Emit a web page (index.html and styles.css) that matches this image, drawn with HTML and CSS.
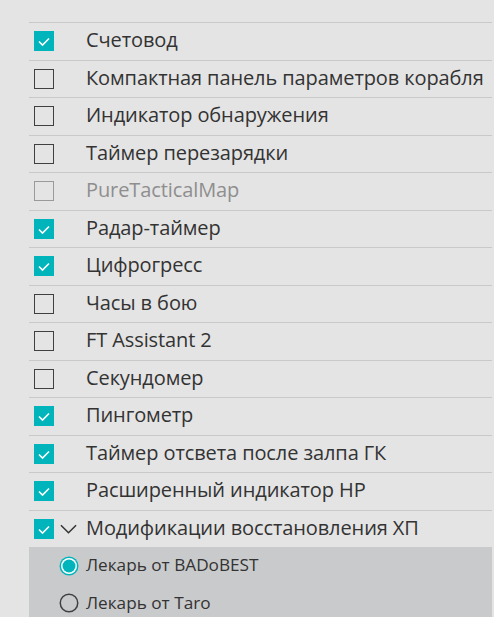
FILE: index.html
```html
<!DOCTYPE html>
<html lang="ru">
<head>
<meta charset="utf-8">
<link rel="stylesheet" href="styles.css">
</head>
<body>
<div class="list">
  <div class="row"><span class="cb on"><svg viewBox="0 0 20 20"><polyline points="5,10.5 8.5,14 15,7.5"/></svg></span><span class="label">Счетовод</span></div>
  <div class="row"><span class="cb"></span><span class="label">Компактная панель параметров корабля</span></div>
  <div class="row"><span class="cb"></span><span class="label">Индикатор обнаружения</span></div>
  <div class="row"><span class="cb"></span><span class="label">Таймер перезарядки</span></div>
  <div class="row disabled"><span class="cb"></span><span class="label">PureTacticalMap</span></div>
  <div class="row"><span class="cb on"><svg viewBox="0 0 20 20"><polyline points="5,10.5 8.5,14 15,7.5"/></svg></span><span class="label">Радар-таймер</span></div>
  <div class="row"><span class="cb on"><svg viewBox="0 0 20 20"><polyline points="5,10.5 8.5,14 15,7.5"/></svg></span><span class="label">Цифрогресс</span></div>
  <div class="row"><span class="cb"></span><span class="label">Часы в бою</span></div>
  <div class="row"><span class="cb"></span><span class="label">FT Assistant 2</span></div>
  <div class="row"><span class="cb"></span><span class="label">Секундомер</span></div>
  <div class="row"><span class="cb on"><svg viewBox="0 0 20 20"><polyline points="5,10.5 8.5,14 15,7.5"/></svg></span><span class="label">Пингометр</span></div>
  <div class="row"><span class="cb on"><svg viewBox="0 0 20 20"><polyline points="5,10.5 8.5,14 15,7.5"/></svg></span><span class="label">Таймер отсвета после залпа ГК</span></div>
  <div class="row"><span class="cb on"><svg viewBox="0 0 20 20"><polyline points="5,10.5 8.5,14 15,7.5"/></svg></span><span class="label">Расширенный индикатор HP</span></div>
  <div class="row parent"><span class="cb on"><svg viewBox="0 0 20 20"><polyline points="5,10.5 8.5,14 15,7.5"/></svg></span><svg class="chev" viewBox="0 0 18 10"><polyline points="1,1 9,9 17,1"/></svg><span class="label">Модификации восстановления ХП</span></div>
  <div class="sub">
    <div class="subrow"><svg class="radio" viewBox="0 0 20 20"><circle cx="10" cy="10" r="9.5" class="r-outer"/><circle cx="10" cy="10" r="8" class="r-gap"/><circle cx="10" cy="10" r="6.5" class="r-dot"/></svg><span class="sublabel">Лекарь от BADoBEST</span></div>
    <div class="subrow"><svg class="radio" viewBox="0 0 20 20"><circle cx="10" cy="10" r="8.75" class="r-off"/></svg><span class="sublabel">Лекарь от Taro</span></div>
  </div>
</div>
</body>
</html>
```
FILE: styles.css
```css
html, body {
  margin: 0;
  padding: 0;
  background: #e4e4e4;
  height: 100%;
  overflow: hidden;
}
body {
  font-family: "Open Sans", "Noto Sans", sans-serif;
  color: #333333;
}
.list {
  margin-top: 22px;
  margin-left: 29px;
  width: 463px;
}
.row {
  box-sizing: border-box;
  height: 37.5px;
  border-top: 1px solid #c9c9c9;
  display: flex;
  align-items: center;
  padding-left: 5px;
}
.cb {
  box-sizing: border-box;
  width: 20px;
  height: 20px;
  border: 1.5px solid #404040;
  flex: none;
  display: flex;
}
.cb.on {
  background: #00b4bb;
  border: none;
}
.cb svg {
  width: 20px;
  height: 20px;
}
.cb polyline {
  fill: none;
  stroke: #fff;
  stroke-width: 1.6;
}
.label {
  margin-left: 32px;
  padding-bottom: 3px;
  font-size: 20px;
  white-space: nowrap;
  letter-spacing: -0.1px;
}
.disabled .cb {
  border-color: #9a9a9a;
}
.disabled .label {
  color: #8e8e8e;
}
.parent .chev {
  width: 17px;
  height: 10px;
  margin-left: 6px;
  flex: none;
}
.chev polyline {
  fill: none;
  stroke: #333333;
  stroke-width: 1.6;
}
.parent .label {
  margin-left: 9px;
}
.sub {
  background: #c9cacb;
}
.subrow {
  height: 37.5px;
  display: flex;
  align-items: center;
  padding-left: 30px;
  box-sizing: border-box;
}
.radio {
  width: 20px;
  height: 20px;
  flex: none;
}
.r-outer { fill: #00b4bb; }
.r-gap { fill: #ffffff; }
.r-dot { fill: #00b4bb; }
.r-off {
  fill: none;
  stroke: #404040;
  stroke-width: 1.5;
}
.sublabel {
  margin-left: 7px;
  padding-bottom: 2px;
  font-size: 17.2px;
  white-space: nowrap;
}
```
